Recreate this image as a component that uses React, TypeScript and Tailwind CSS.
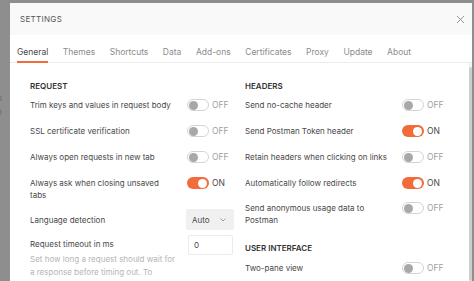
import React from "react";

const font = { fontFamily: "Inter, 'Noto Sans', sans-serif" };

const tabs = ["General", "Themes", "Shortcuts", "Data", "Add-ons", "Certificates", "Proxy", "Update", "About"];

const Toggle: React.FC<{ on?: boolean }> = ({ on }) => (
  <div className="flex items-center gap-[3px] h-[12px]">
    {on ? (
      <div className="w-[22px] h-[12px] rounded-full bg-[#f26b3a] flex items-center justify-end pr-[2px]">
        <div className="w-[9px] h-[9px] rounded-full bg-white" />
      </div>
    ) : (
      <div className="w-[22px] h-[12px] rounded-full bg-white border border-[#d4d4d4] flex items-center pl-[1px]">
        <div className="w-[9px] h-[9px] rounded-full bg-[#a8a8a8]" />
      </div>
    )}
    <span className={on ? "text-[8.5px] text-[#484848]" : "text-[8.5px] text-[#a0a0a0]"}>{on ? "ON" : "OFF"}</span>
  </div>
);

const Row: React.FC<{ label: React.ReactNode; on?: boolean; className?: string }> = ({ label, on, className }) => (
  <div className={"flex items-start " + (className ?? "")}>
    <div className="w-[157px] text-[8px] leading-[12px] text-[#484848]">{label}</div>
    <Toggle on={on} />
  </div>
);

export default function App() {
  return (
    <div className="w-[474px] h-[281px] bg-[#8e8e8e] overflow-hidden flex flex-col" style={font}>
      <div className="h-[3px] shrink-0" />
      <div className="flex flex-1 min-h-0">
        <div className="w-[10px] shrink-0 overflow-hidden flex flex-col text-[8px] text-[#6a6a6a] leading-[14px] pt-[88px]">
          <span className="-ml-[2px]">s</span>
          <span className="-ml-[10px]">ete</span>
        </div>
        <div className="w-[462px] shrink-0 bg-white flex flex-col">
          <div className="h-[32px] bg-[#f9f9f9] flex items-center justify-between pl-[10px] pr-[7px]">
            <span className="text-[8px] tracking-[0.04em] text-[#555]">SETTINGS</span>
            <svg width="9" height="9" viewBox="0 0 9 9" fill="none" stroke="#8a8a8a" strokeWidth="0.9">
              <path d="M1 1 L8 8 M8 1 L1 8" />
            </svg>
          </div>
          <div className="h-[28px] flex items-end border-b border-[#ececec] pl-[7px] gap-[14.5px]">
            {tabs.map((t, i) => (
              <div
                key={t}
                className={
                  i === 0
                    ? "pb-[2px] border-b-2 border-[#f26b3a] text-[8.5px] text-[#484848] -mb-px"
                    : "pb-[3px] text-[8.5px] text-[#8c8c8c]"
                }
              >
                {t}
              </div>
            ))}
          </div>
          <div className="flex flex-1 min-h-0">
            <div className="flex flex-1 pl-[20px] pt-[17px] gap-[10px]">
              <div className="w-[205px] flex flex-col">
                <div className="text-[8px] leading-[12px] font-semibold text-[#333]">REQUEST</div>
                <Row className="mt-[7px]" label="Trim keys and values in request body" />
                <Row className="mt-[14px]" label="SSL certificate verification" />
                <Row className="mt-[14px]" label="Always open requests in new tab" />
                <Row className="mt-[14px]" on label={<>Always ask when closing unsaved<br />tabs</>} />
                <div className="flex items-center mt-[8px]">
                  <div className="w-[156px] text-[8px] leading-[12px] text-[#484848]">Language detection</div>
                  <div className="w-[48px] h-[21px] bg-[#f0f0f0] rounded-[2px] flex items-center justify-between pl-[6px] pr-[8px]">
                    <span className="text-[8px] text-[#484848]">Auto</span>
                    <svg width="6" height="4" viewBox="0 0 6 4" fill="none" stroke="#888" strokeWidth="0.8">
                      <path d="M0.5 0.5 L3 3 L5.5 0.5" />
                    </svg>
                  </div>
                </div>
                <div className="flex items-start mt-[5px]">
                  <div className="w-[158px] flex flex-col pt-[3px]">
                    <div className="text-[8px] leading-[12px] text-[#484848]">Request timeout in ms</div>
                    <div className="text-[8px] leading-[13px] text-[#b5b5b5] mt-[3px]">
                      Set how long a request should wait for<br />a response before timing out. To
                    </div>
                  </div>
                  <div className="w-[45px] h-[20px] border border-[#ebebeb] rounded-[2px] flex items-center pl-[5px] text-[8px] text-[#484848]">
                    0
                  </div>
                </div>
              </div>
              <div className="w-[205px] flex flex-col">
                <div className="text-[8px] leading-[12px] font-semibold text-[#333]">HEADERS</div>
                <Row className="mt-[7px]" label="Send no-cache header" />
                <Row className="mt-[14px]" on label="Send Postman Token header" />
                <Row className="mt-[14px]" label="Retain headers when clicking on links" />
                <Row className="mt-[14px]" on label="Automatically follow redirects" />
                <Row className="mt-[13px]" label={<>Send anonymous usage data to<br />Postman</>} />
                <div className="text-[8px] leading-[12px] font-semibold text-[#333] mt-[16px]">USER INTERFACE</div>
                <Row className="mt-[8px]" label="Two-pane view" />
              </div>
            </div>
            <div className="w-[3px] pt-[4px] bg-[#f4f4f4]">
              <div className="h-full bg-[#cdcdcd] rounded-full" />
            </div>
          </div>
        </div>
      </div>
    </div>
  );
}
